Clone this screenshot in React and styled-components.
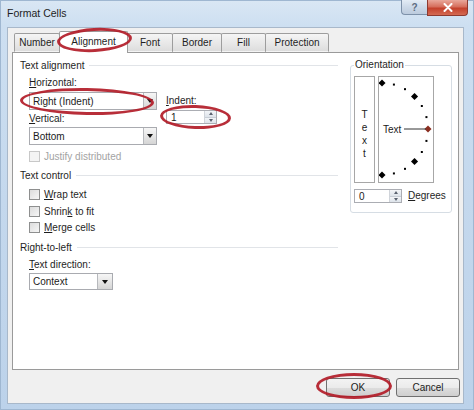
import React from 'react';
import styled, { createGlobalStyle } from 'styled-components';

const Global = createGlobalStyle`
  html, body { margin: 0; padding: 0; background: #ffffff; }
  body {
    font-family: "Liberation Sans", Arial, sans-serif;
    font-size: 10px;
    color: #1b1b1b;
  }
  * { box-sizing: border-box; }
`;

const Window = styled.div`
  position: relative;
  width: 474px;
  height: 410px;
  display: flex;
  flex-direction: column;
  padding: 0 10px 6px 7px;
  background: linear-gradient(180deg, #dae7f4 0px, #cddff1 26px, #c4d8ed 200px, #bcd2ea 410px);
  box-shadow: inset 0 0 0 1px #9fb7d1;
  overflow: hidden;
`;

const TitleBar = styled.div`
  height: 27px;
  display: flex;
  align-items: flex-start;
  margin-right: -4px;
`;

const Title = styled.div`
  padding-top: 7px;
  line-height: 12px;
  font-size: 10.5px;
  color: #1e1e1e;
`;

const Controls = styled.div`
  margin-left: auto;
  display: flex;
`;

const HelpBtn = styled.div`
  width: 26px;
  height: 15px;
  border: 1px solid #7d91a9;
  border-top: none;
  border-right: none;
  border-radius: 0 0 0 4px;
  background: linear-gradient(180deg, #e3ecf5 0%, #ccd9e8 50%, #bccbdd 100%);
  color: #5d6d82;
  font-size: 10px;
  font-weight: bold;
  display: flex;
  align-items: center;
  justify-content: center;
`;

const CloseBtn = styled.div`
  width: 41px;
  height: 16px;
  border: 1px solid #8e3a2f;
  border-top: none;
  border-radius: 0 0 4px 0;
  background: linear-gradient(180deg, #e9a89b 0%, #d66e5c 45%, #c4412c 55%, #d46a52 100%);
  display: flex;
  align-items: center;
  justify-content: center;
`;

const Dialog = styled.div`
  flex: 1;
  display: flex;
  flex-direction: column;
  background: #f0f0f0;
  border: 1px solid #a8b8ca;
  padding: 3px 4px 6px 4px;
`;

const TabStrip = styled.div`
  height: 21px;
  display: flex;
  align-items: flex-end;
  margin-left: 2px;
  position: relative;
  z-index: 1;
`;

const Tab = styled.div`
  width: ${p => p.$w}px;
  height: ${p => (p.$active ? 22 : 19)}px;
  margin-bottom: ${p => (p.$active ? -1 : 0)}px;
  margin-left: ${p => (p.$first ? 0 : -1)}px;
  border: 1px solid #9d9d9d;
  border-bottom: ${p => (p.$active ? 'none' : '1px solid transparent')};
  border-radius: 2px 2px 0 0;
  background: ${p => (p.$active ? '#ffffff' : 'linear-gradient(180deg, #f5f5f5 0%, #e9e9e9 50%, #dddddd 100%)')};
  display: flex;
  align-items: center;
  justify-content: center;
  padding-bottom: ${p => (p.$active ? 2 : 0)}px;
  color: #1e1e1e;
  position: relative;
  z-index: ${p => (p.$active ? 2 : 1)};
`;

const Panel = styled.div`
  height: 318px;
  background: #ffffff;
  border: 1px solid #9a9a9a;
  display: flex;
  padding: 6px 6px 0 7px;
  gap: 12px;
`;

const LeftCol = styled.div`
  width: 318px;
  display: flex;
  flex-direction: column;
`;

const GroupHeader = styled.div`
  display: flex;
  align-items: center;
  height: 12px;
  margin-top: ${p => p.$mt || 0}px;
  color: #1e1e1e;
  &::after {
    content: '';
    flex: 1;
    height: 1px;
    margin-left: 5px;
    background: #e1e4e8;
  }
`;

const Indented = styled.div`
  padding-left: 9px;
  display: flex;
  flex-direction: column;
`;

const Row = styled.div`
  display: flex;
`;

const SubCol = styled.div`
  display: flex;
  flex-direction: column;
  margin-left: ${p => p.$ml || 0}px;
`;

const Label = styled.div`
  height: 12px;
  line-height: 12px;
  margin-top: ${p => p.$mt || 0}px;
  color: #1e1e1e;
  u { text-decoration: underline; text-underline-offset: 1px; }
`;

const Select = styled.div`
  width: ${p => p.$w}px;
  height: ${p => p.$h || 18}px;
  margin-top: ${p => p.$mt || 0}px;
  border: 1px solid #a9abb0;
  background: #ffffff;
  display: flex;
  align-items: stretch;
`;

const SelectText = styled.div`
  flex: 1;
  display: flex;
  align-items: center;
  padding-left: 3px;
  color: #1b1b1b;
`;

const DropBtn = styled.div`
  width: ${p => p.$w || 13}px;
  border-left: 1px solid #b7b9bd;
  background: linear-gradient(180deg, #f6f6f6 0%, #e6e6e6 50%, #d5d5d5 100%);
  display: flex;
  align-items: center;
  justify-content: center;
  &::after {
    content: '';
    border-left: 3px solid transparent;
    border-right: 3px solid transparent;
    border-top: 4px solid #111;
  }
`;

const Spin = styled.div`
  width: ${p => p.$w}px;
  height: 14px;
  margin-top: ${p => p.$mt || 0}px;
  border: 1px solid #abadb3;
  background: #fff;
  display: flex;
`;

const SpinText = styled.div`
  flex: 1;
  display: flex;
  align-items: center;
  padding-left: 4px;
`;

const SpinBtns = styled.div`
  width: 12px;
  display: flex;
  flex-direction: column;
  border-left: 1px solid #d0d4da;
`;

const SpinArrow = styled.div`
  flex: 1;
  background: linear-gradient(180deg, #f3f5f8 0%, #dde3ea 100%);
  display: flex;
  align-items: center;
  justify-content: center;
  & + & { border-top: 1px solid #c8ced6; }
  &::after {
    content: '';
    border-left: 2.5px solid transparent;
    border-right: 2.5px solid transparent;
    ${p => (p.$up ? 'border-bottom: 3px solid #5a6270;' : 'border-top: 3px solid #5a6270;')}
  }
`;

const CheckRow = styled.div`
  display: flex;
  align-items: center;
  height: 12px;
  margin-top: ${p => p.$mt || 0}px;
  color: ${p => (p.$disabled ? '#a3a3a3' : '#1e1e1e')};
  u { text-decoration: underline; text-underline-offset: 1px; }
`;

const Box = styled.div`
  width: 11px;
  height: 11px;
  margin-right: 4px;
  border: 1px solid ${p => (p.$disabled ? '#c8c8c8' : '#8e8f8f')};
  background: ${p => (p.$disabled ? '#f4f4f4' : 'linear-gradient(135deg, #dcdcdc 0%, #f6f6f6 100%)')};
`;

const Orientation = styled.fieldset`
  width: 102px;
  height: 154px;
  margin: 0;
  padding: 0 3px 0 3px;
  border: 1px solid #d6dde4;
  border-radius: 3px;
  display: flex;
  flex-direction: column;
`;

const Legend = styled.legend`
  padding: 0 1px;
  margin-left: 0px;
  line-height: 12px;
  color: #1e1e1e;
`;

const OrientRow = styled.div`
  display: flex;
  gap: 3px;
  margin-top: 5px;
`;

const VertTextBox = styled.div`
  width: 21px;
  height: 107px;
  border: 1px solid #a7a7a7;
  display: flex;
  flex-direction: column;
  align-items: center;
  justify-content: center;
  padding-top: 8px;
  span { line-height: 13px; height: 13px; }
`;

const DialBox = styled.div`
  width: 56px;
  height: 107px;
  border: 1px solid #a7a7a7;
  display: flex;
`;

const DegreeRow = styled.div`
  display: flex;
  align-items: center;
  margin-top: 6px;
  gap: 6px;
`;

const ButtonRow = styled.div`
  display: flex;
  justify-content: flex-end;
  gap: 6px;
  margin-top: 8px;
  margin-right: -1px;
`;

const Button = styled.div`
  width: 64px;
  height: 19px;
  border: 1px solid #707070;
  border-radius: 3px;
  background: linear-gradient(180deg, #f3f3f3 0%, #ebebeb 50%, #dddddd 51%, #cfcfcf 100%);
  display: flex;
  align-items: center;
  justify-content: center;
  color: #1b1b1b;
`;

const Ellipse = styled.div`
  position: absolute;
  left: ${p => p.$x}px;
  top: ${p => p.$y}px;
  width: ${p => p.$w}px;
  height: ${p => p.$h}px;
  border: 3px solid rgba(178, 28, 40, 0.92);
  border-radius: 50%;
  transform: rotate(${p => p.$r || 0}deg);
  z-index: 5;
  pointer-events: none;
`;

function Dial() {
  const cx = 3, cy = 52, r = 46;
  const items = [];
  for (let a = 90; a >= -90; a -= 15) {
    const rad = (a * Math.PI) / 180;
    const x = cx + r * Math.cos(rad);
    const y = cy - r * Math.sin(rad);
    if (a === 0) {
      items.push(<rect key={a} x={x - 2.5} y={y - 2.5} width="5" height="5" fill="#8a2d1f" transform={`rotate(45 ${x} ${y})`} />);
    } else if (a % 45 === 0) {
      items.push(<rect key={a} x={x - 2.5} y={y - 2.5} width="5" height="5" fill="#000" transform={`rotate(45 ${x} ${y})`} />);
    } else {
      items.push(<rect key={a} x={x - 1} y={y - 1} width="2" height="2" fill="#000" />);
    }
  }
  return (
    <svg width="54" height="105" viewBox="0 0 54 105">
      {items}
      <text x="4" y="55.5" fontSize="10" fontFamily="Liberation Sans, Arial, sans-serif" fill="#1b1b1b">Text</text>
      <line x1="25" y1="52" x2="47" y2="52" stroke="#333" strokeWidth="1" />
    </svg>
  );
}

export default function App() {
  return (
    <>
      <Global />
      <Window>
        <TitleBar>
          <Title>Format Cells</Title>
          <Controls>
            <HelpBtn>?</HelpBtn>
            <CloseBtn>
              <svg width="10" height="9" viewBox="0 0 10 9">
                <path d="M1.5 1 L8.5 8 M8.5 1 L1.5 8" stroke="#fff" strokeWidth="2" strokeLinecap="round" />
              </svg>
            </CloseBtn>
          </Controls>
        </TitleBar>
        <Dialog>
          <TabStrip>
            <Tab $first $w={46}>Number</Tab>
            <Tab $active $w={69}>Alignment</Tab>
            <Tab $w={46}>Font</Tab>
            <Tab $w={50}>Border</Tab>
            <Tab $w={45}>Fill</Tab>
            <Tab $w={64}>Protection</Tab>
          </TabStrip>
          <Panel>
            <LeftCol>
              <GroupHeader>Text alignment</GroupHeader>
              <Indented>
                <Row>
                  <SubCol>
                    <Label $mt={6}><u>H</u>orizontal:</Label>
                    <Select $w={128} $mt={3}>
                      <SelectText>Right (Indent)</SelectText>
                      <DropBtn />
                    </Select>
                    <Label $mt={3}><u>V</u>ertical:</Label>
                    <Select $w={128} $mt={2}>
                      <SelectText>Bottom</SelectText>
                      <DropBtn />
                    </Select>
                  </SubCol>
                  <SubCol $ml={9}>
                    <Label $mt={24}><u>I</u>ndent:</Label>
                    <Spin $w={51} $mt={3}>
                      <SpinText>1</SpinText>
                      <SpinBtns>
                        <SpinArrow $up />
                        <SpinArrow />
                      </SpinBtns>
                    </Spin>
                  </SubCol>
                </Row>
                <CheckRow $mt={5} $disabled>
                  <Box $disabled />
                  Justify distributed
                </CheckRow>
              </Indented>
              <GroupHeader $mt={7}>Text control</GroupHeader>
              <Indented>
                <CheckRow $mt={7}><Box /><span><u>W</u>rap text</span></CheckRow>
                <CheckRow $mt={5}><Box /><span>Shrin<u>k</u> to fit</span></CheckRow>
                <CheckRow $mt={4}><Box /><span><u>M</u>erge cells</span></CheckRow>
              </Indented>
              <GroupHeader $mt={8}>Right-to-left</GroupHeader>
              <Indented>
                <Label $mt={6}><u>T</u>ext direction:</Label>
                <Select $w={84} $h={17} $mt={2}>
                  <SelectText>Context</SelectText>
                  <DropBtn $w={15} />
                </Select>
              </Indented>
            </LeftCol>
            <Orientation>
              <Legend>Orientation</Legend>
              <OrientRow>
                <VertTextBox>
                  <span>T</span>
                  <span>e</span>
                  <span>x</span>
                  <span>t</span>
                </VertTextBox>
                <DialBox>
                  <Dial />
                </DialBox>
              </OrientRow>
              <DegreeRow>
                <Spin $w={48}>
                  <SpinText>0</SpinText>
                  <SpinBtns>
                    <SpinArrow $up />
                    <SpinArrow />
                  </SpinBtns>
                </Spin>
                <Label><u>D</u>egrees</Label>
              </DegreeRow>
            </Orientation>
          </Panel>
          <ButtonRow>
            <Button>OK</Button>
            <Button>Cancel</Button>
          </ButtonRow>
        </Dialog>
        <Ellipse $x={57} $y={28} $w={75} $h={24} $r={-3} />
        <Ellipse $x={20} $y={88} $w={134} $h={27} $r={1} />
        <Ellipse $x={160} $y={105} $w={71} $h={24} $r={2} />
        <Ellipse $x={316} $y={373} $w={76} $h={26} $r={0} />
      </Window>
    </>
  );
}
